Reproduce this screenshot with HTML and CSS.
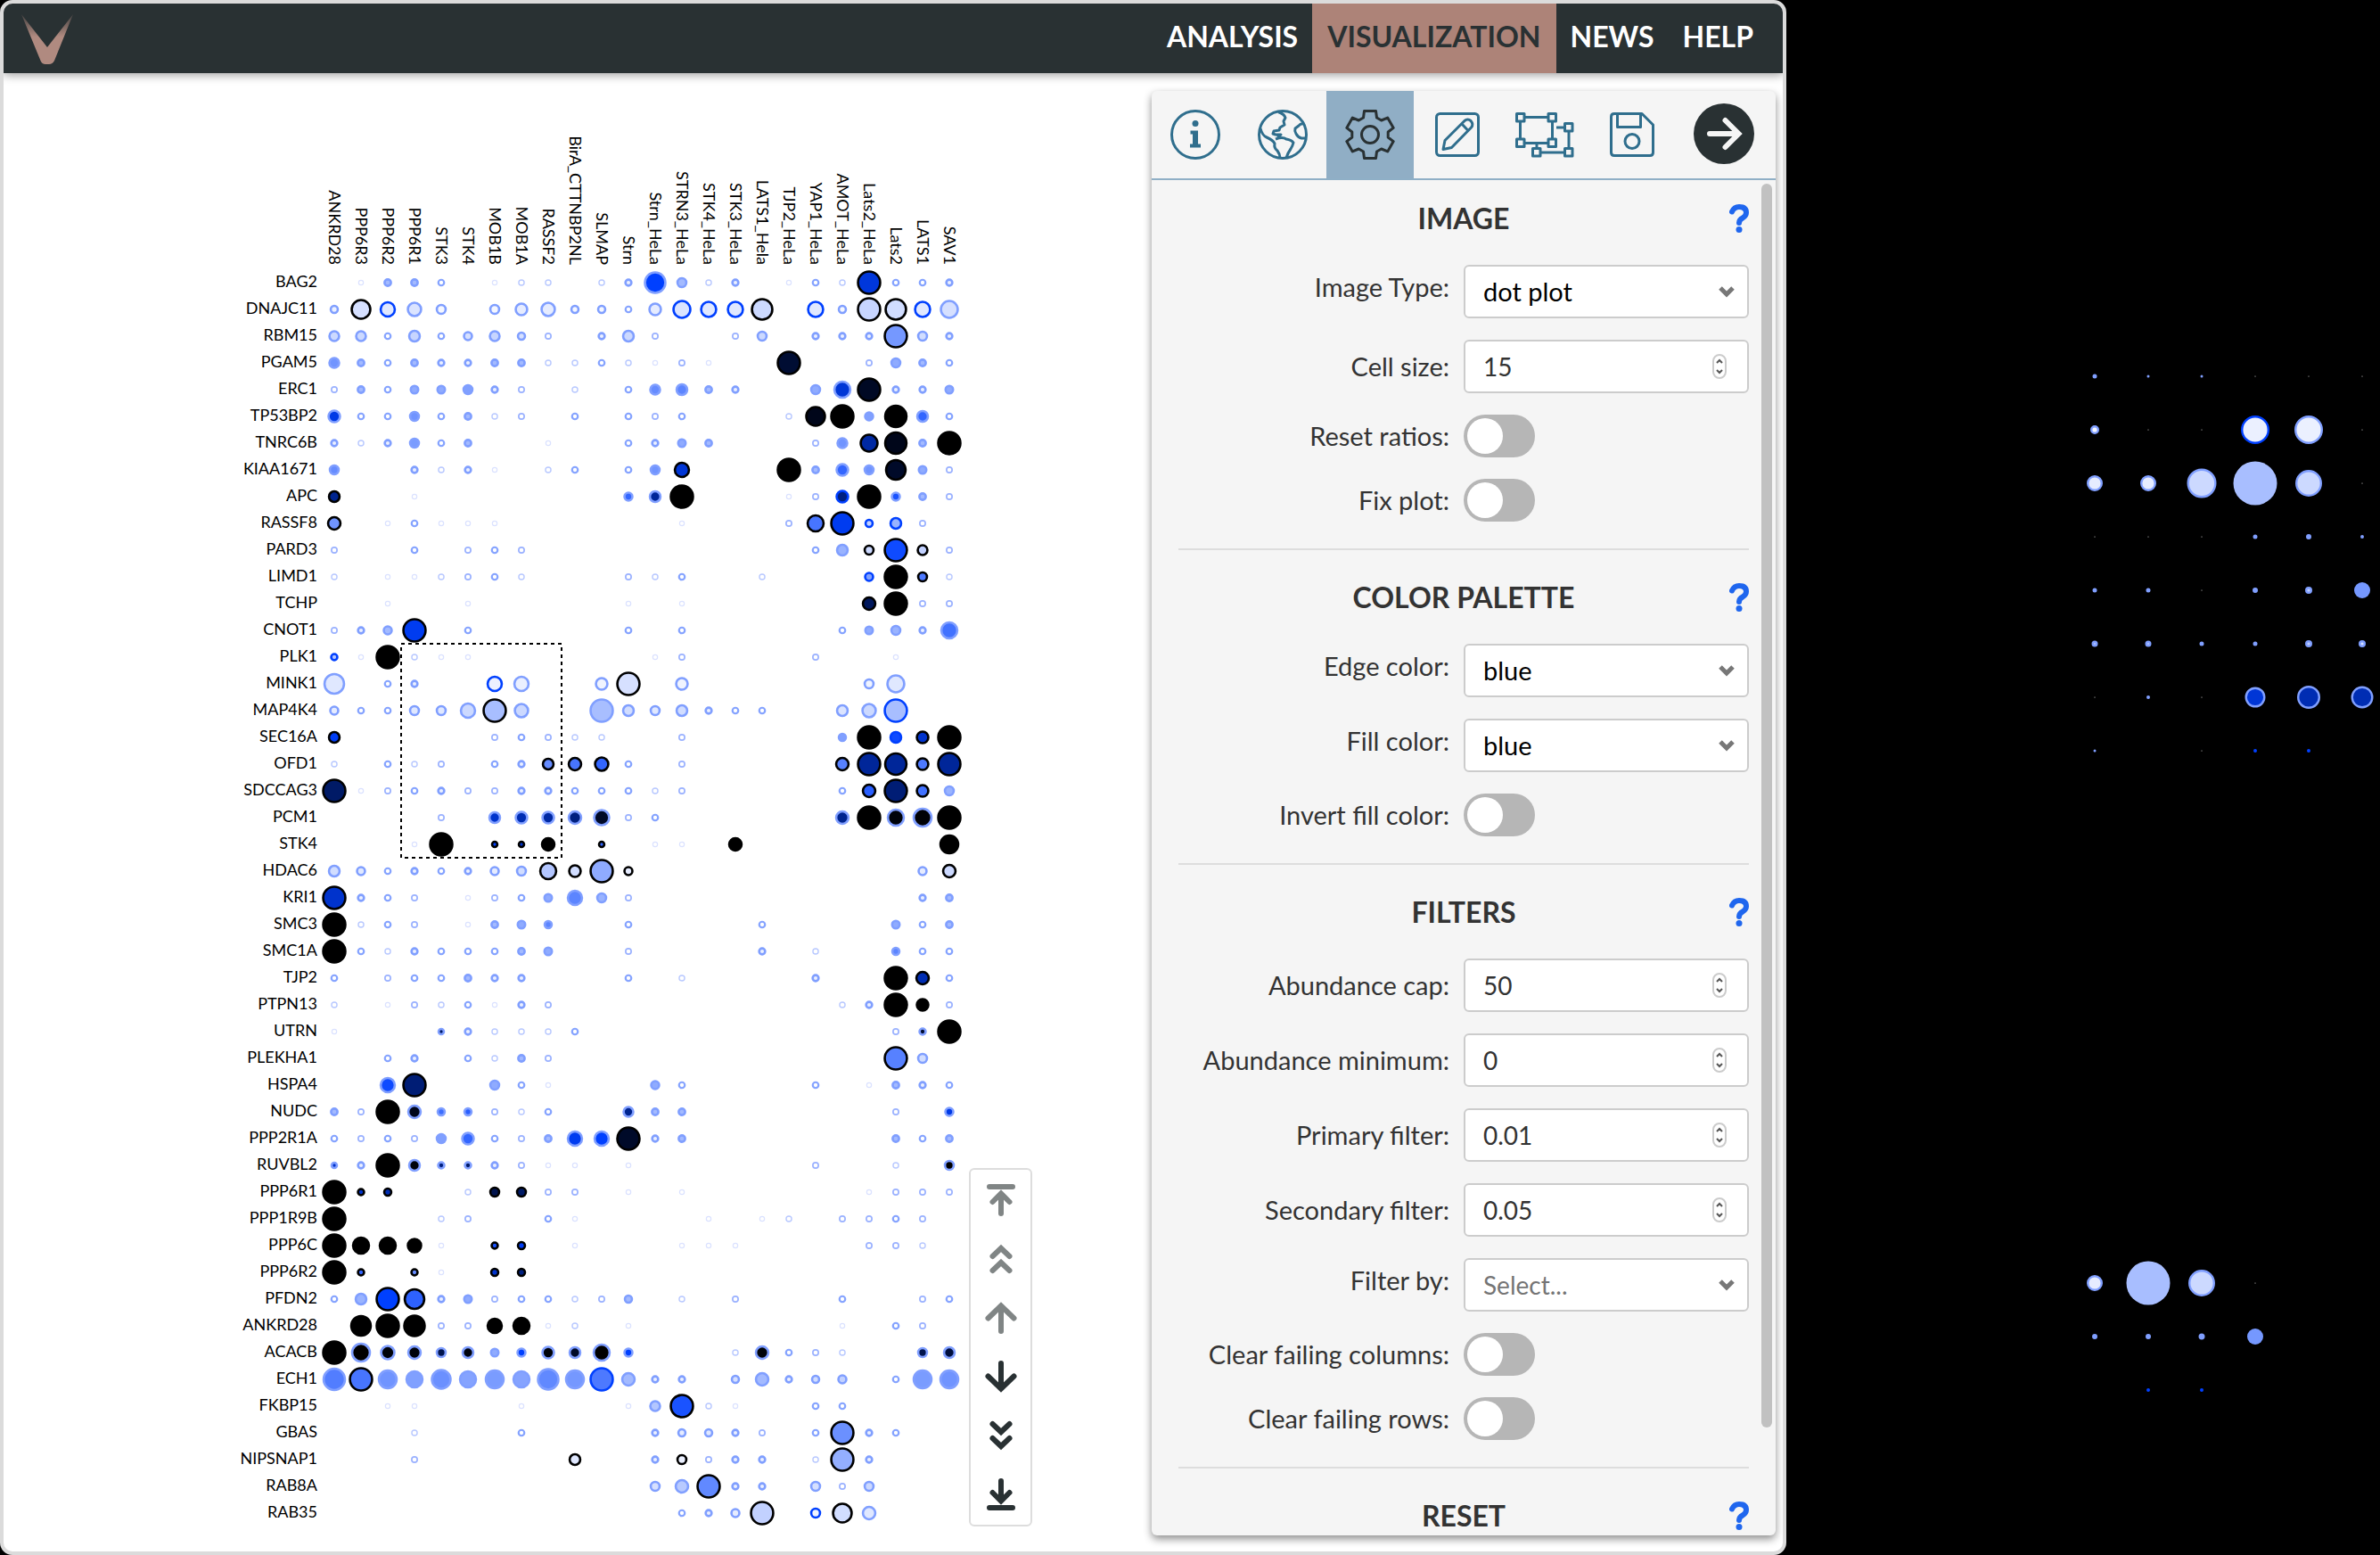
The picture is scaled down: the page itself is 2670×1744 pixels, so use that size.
FILE: index.html
```html
<!DOCTYPE html>
<html lang="en">
<head>
<meta charset="utf-8">
<title>Visualization</title>
<meta name="viewport" content="width=device-width, initial-scale=1">
<link rel="stylesheet" href="styles.css">
</head>
<body>
<div class="app">
  <header class="header">
    <a class="logo" href="#home" aria-label="Home">
      <svg width="60" height="60" viewBox="0 -2 60 60" aria-hidden="true">
        <defs>
          <linearGradient id="fade" x1="0" y1="0" x2="0" y2="1">
            <stop offset="0" stop-color="#b08a80" stop-opacity="0.2"/>
            <stop offset="0.45" stop-color="#b08a80"/>
          </linearGradient>
        </defs>
        <path fill="url(#fade)" d="M0 1 L29 38 L58 1 L37 53 Q35 57 31 57 H27 Q23 57 21.500 53 Z"/>
      </svg>
    </a>
    <nav class="nav">
      <a href="#analysis">ANALYSIS</a>
      <a href="#visualization" class="current">VISUALIZATION</a>
      <a href="#news">NEWS</a>
      <a href="#help">HELP</a>
    </nav>
  </header>

  <main class="main">
    <div class="plot"><svg id="plot" class="plot-svg" role="img" aria-label="Dot plot"></svg></div>

    <div class="pager">
      <button disabled aria-label="First page"><svg viewBox="0 0 40 40"><path d="M7 5H33M20 35V13M10.500 22L20 12.500L29.500 22"/></svg></button>
      <button disabled aria-label="Page up"><svg viewBox="0 0 40 40"><path d="M10.500 17L20 8L29.500 17M10.500 33L20 24L29.500 33"/></svg></button>
      <button disabled aria-label="Row up"><svg viewBox="0 0 40 40"><path d="M20 35V7M5.500 20.500L20 6.500L34.500 20.500"/></svg></button>
      <button aria-label="Row down"><svg viewBox="0 0 40 40"><path d="M20 5V33M5.500 19.500L20 33.500L34.500 19.500"/></svg></button>
      <button aria-label="Page down"><svg viewBox="0 0 40 40"><path d="M10.500 7L20 16L29.500 7M10.500 23L20 32L29.500 23"/></svg></button>
      <button aria-label="Last page"><svg viewBox="0 0 40 40"><path d="M7 35H33M20 5V27M10.500 18L20 27.500L29.500 18"/></svg></button>
    </div>

    <aside class="panel">
      <div class="tabs">
        <button class="tab" aria-label="Information">
          <svg width="56" height="56" viewBox="0 0 56 56"><circle cx="28" cy="28" r="26.500"/><circle class="solid" cx="28" cy="15.500" r="3.500"/><path class="solid" d="M22.500 23.500h8.500v15h3v4h-12v-4h3v-11h-2.500z"/></svg>
        </button>
        <button class="tab" aria-label="Overview">
          <svg width="56" height="56" viewBox="0 0 56 56"><circle cx="28" cy="28" r="26.500"/><path d="M23 2.500Q30 5 31 9L29 13L30 17L25 20L24 23L18 24L17 27L20 28L26 28L22 31M20 33Q28 30 32 33Q38 34 40 37Q39 41 37 44Q34 48 32 54M3 21Q5 29 10 31Q17 34 19 38Q18 43 22 46Q25 50 25 54M52 16Q48 15 46 18L42 21Q41 24 43 27Q45 31 49 32L54 32"/></svg>
        </button>
        <button class="tab active" aria-label="Settings">
          <svg width="56" height="56" viewBox="-28 -28 56 56"><circle r="9.500"/><path d="M-6.500 -26.500H6.500L7.500 -19L12.700 -16L19.700 -18.900L26.200 -7.600L20.200 -3V3L26.200 7.600L19.700 18.900L12.700 16L7.500 19L6.500 26.500H-6.500L-7.500 19L-12.700 16L-19.700 18.900L-26.200 7.600L-20.200 3V-3L-26.200 -7.600L-19.700 -18.900L-12.700 -16L-7.500 -19Z"/></svg>
        </button>
        <button class="tab" aria-label="Annotation">
          <svg width="52" height="52" viewBox="-1 -1 52 52"><rect x="1.500" y="1.500" width="47" height="47" rx="4"/><path d="M9 41.500L11 31.500L33 9.500Q36.500 6.500 40 9.500Q43.500 13.500 40.500 17L18.500 39.500ZM30 13L37 20.500"/></svg>
        </button>
        <button class="tab" aria-label="Selection">
          <svg width="66" height="52" viewBox="0 -1 66 52"><path d="M10 5.500H36.500M5.500 10V29.500M41.500 10V29.500M10 34.500H36.500M46 17H55M60 21.500V40M28.500 45H55M24 40V34.500M1.500 1.500h8.500v8.500h-8.500zM37 1.500h8.500v8.500h-8.500zM1.500 30h8.500v8.500h-8.500zM37 30h8.500v8.500h-8.500zM55.500 12.500h8.500v8.500h-8.500zM55.500 40.500h8.500v8.500h-8.500zM19.500 40.500h8.500v8.500h-8.500z"/></svg>
        </button>
        <button class="tab" aria-label="Save">
          <svg width="52" height="52" viewBox="-1 -1 52 52"><path d="M5 1.500H36L48.500 14V45Q48.500 48.500 45 48.500H5Q1.500 48.500 1.500 45V5Q1.500 1.500 5 1.500ZM8.500 2V16.500H34.500V2"/><circle cx="25" cy="32.500" r="8"/></svg>
        </button>
        <button class="tab collapse" aria-label="Hide panel">
          <svg width="68" height="68" viewBox="0 0 68 68"><circle cx="34" cy="34" r="34"/><path d="M18 34H49M35.500 19L50.500 34L35.500 49"/></svg>
        </button>
      </div>

      <div class="panel-body">
        <section class="section">
          <div class="section-head"><h2>IMAGE</h2><button class="help" aria-label="Help: image"><svg viewBox="0 0 22 32"><path d="M3 8.500Q5.500 3 11 3Q19 3 19 9.500Q19 13 15 15.500Q11 17.500 11 21"/><circle cx="11" cy="28.500" r="3.500"/></svg></button></div>
          <div class="row pick"><label for="type">Image Type:</label>
            <div class="field"><select id="type"><option>dot plot</option></select><svg class="chevron" viewBox="0 0 20 14"><path d="M3 3L10 10L17 3"/></svg></div></div>
          <div class="row"><label for="cell">Cell size:</label>
            <div class="field"><input id="cell" type="number" value="15"><svg class="spin" viewBox="0 0 16 28"><rect x="1" y="1" width="14" height="26" rx="7"/><path d="M5 10L8 7L11 10M5 18L8 21L11 18"/></svg></div></div>
          <div class="row"><label for="ratios">Reset ratios:</label><input id="ratios" type="checkbox" class="toggle"></div>
          <div class="row"><label for="fix">Fix plot:</label><input id="fix" type="checkbox" class="toggle"></div>
        </section>

        <section class="section">
          <div class="section-head"><h2>COLOR PALETTE</h2><button class="help" aria-label="Help: color palette"><svg viewBox="0 0 22 32"><path d="M3 8.500Q5.500 3 11 3Q19 3 19 9.500Q19 13 15 15.500Q11 17.500 11 21"/><circle cx="11" cy="28.500" r="3.500"/></svg></button></div>
          <div class="row pick"><label for="edge">Edge color:</label>
            <div class="field"><select id="edge"><option>blue</option></select><svg class="chevron" viewBox="0 0 20 14"><path d="M3 3L10 10L17 3"/></svg></div></div>
          <div class="row pick"><label for="fill">Fill color:</label>
            <div class="field"><select id="fill"><option>blue</option></select><svg class="chevron" viewBox="0 0 20 14"><path d="M3 3L10 10L17 3"/></svg></div></div>
          <div class="row"><label for="invert">Invert fill color:</label><input id="invert" type="checkbox" class="toggle"></div>
        </section>

        <section class="section">
          <div class="section-head"><h2>FILTERS</h2><button class="help" aria-label="Help: filters"><svg viewBox="0 0 22 32"><path d="M3 8.500Q5.500 3 11 3Q19 3 19 9.500Q19 13 15 15.500Q11 17.500 11 21"/><circle cx="11" cy="28.500" r="3.500"/></svg></button></div>
          <div class="row"><label for="cap">Abundance cap:</label>
            <div class="field"><input id="cap" type="number" value="50"><svg class="spin" viewBox="0 0 16 28"><rect x="1" y="1" width="14" height="26" rx="7"/><path d="M5 10L8 7L11 10M5 18L8 21L11 18"/></svg></div></div>
          <div class="row"><label for="min">Abundance minimum:</label>
            <div class="field"><input id="min" type="number" value="0"><svg class="spin" viewBox="0 0 16 28"><rect x="1" y="1" width="14" height="26" rx="7"/><path d="M5 10L8 7L11 10M5 18L8 21L11 18"/></svg></div></div>
          <div class="row"><label for="primary">Primary filter:</label>
            <div class="field"><input id="primary" type="number" step="0.01" value="0.01"><svg class="spin" viewBox="0 0 16 28"><rect x="1" y="1" width="14" height="26" rx="7"/><path d="M5 10L8 7L11 10M5 18L8 21L11 18"/></svg></div></div>
          <div class="row"><label for="secondary">Secondary filter:</label>
            <div class="field"><input id="secondary" type="number" step="0.01" value="0.05"><svg class="spin" viewBox="0 0 16 28"><rect x="1" y="1" width="14" height="26" rx="7"/><path d="M5 10L8 7L11 10M5 18L8 21L11 18"/></svg></div></div>
          <div class="row pick"><label for="by">Filter by:</label>
            <div class="field"><select id="by" class="empty"><option>Select...</option></select><svg class="chevron" viewBox="0 0 20 14"><path d="M3 3L10 10L17 3"/></svg></div></div>
          <div class="row"><label for="cols">Clear failing columns:</label><input id="cols" type="checkbox" class="toggle"></div>
          <div class="row"><label for="rows">Clear failing rows:</label><input id="rows" type="checkbox" class="toggle"></div>
        </section>

        <section class="section">
          <div class="section-head"><h2>RESET</h2><button class="help" aria-label="Help: reset"><svg viewBox="0 0 22 32"><path d="M3 8.500Q5.500 3 11 3Q19 3 19 9.500Q19 13 15 15.500Q11 17.500 11 21"/><circle cx="11" cy="28.500" r="3.500"/></svg></button></div>
        </section>
        <div class="scrollbar"></div>
      </div>
    </aside>
  </main>
</div>
<div class="closeup"><svg id="closeup" class="closeup-svg" role="img" aria-label="Selected region"></svg></div>
<script src="plot.js"></script>
</body>
</html>
```
FILE: styles.css
```css
* { box-sizing: border-box; }

body {
  margin: 0;
  height: 100vh;
  display: flex;
  background: #000;
  color: #333;
  font-family: Lato, "Liberation Sans", sans-serif;
  font-size: 28px;
  line-height: 36px;
  overflow: hidden;
}

button { margin: 0; padding: 0; border: 0; background: none; font: inherit; cursor: pointer; }

.app {
  flex: 1;
  min-width: 0;
  display: flex;
  flex-direction: column;
  border: 4px solid #dbdbdb;
  border-radius: 14px;
  background: #fff;
  overflow: hidden;
}

.closeup { width: 666px; }
.closeup-svg { display: block; width: 100%; height: 100%; }

/* header */
.header {
  height: 78px;
  flex: none;
  display: flex;
  justify-content: space-between;
  padding: 0 17px;
  background: #293133;
  box-shadow: 0 2px 10px rgba(0, 0, 0, 0.4);
  z-index: 1;
}
.logo { display: flex; align-items: center; padding-left: 3px; }
.nav { display: flex; }
.nav a {
  padding: 0 16px;
  color: #fff;
  font-size: 32px;
  font-weight: 700;
  line-height: 74px;
  text-decoration: none;
}
.nav .current { padding: 0 17px; background: #ad8378; color: #293133; }

/* plot */
.main { flex: 1; min-height: 0; display: flex; }
.plot { flex: 1; min-width: 0; }
.plot-svg { display: block; width: 100%; height: 100%; }
.plot-svg text { font-size: 18px; fill: #000; text-anchor: end; }
.selection { fill: none; stroke: #000; stroke-width: 2; stroke-dasharray: 4 4; }

.pager {
  align-self: flex-end;
  width: 71px;
  margin: 0 134px 28px 0;
  padding: 1px 0;
  border: 2px solid #ddd;
  border-radius: 6px;
  background: #fff;
  display: flex;
  flex-direction: column;
}
.pager button { height: 66px; display: flex; align-items: center; justify-content: center; color: #293133; }
.pager button:disabled { color: #808585; }
.pager svg { width: 40px; height: 40px; fill: none; stroke: currentColor; stroke-width: 6; stroke-linecap: round; }

/* settings panel */
.panel {
  width: 700px;
  margin: 20px 8px 18px 0;
  display: flex;
  flex-direction: column;
  border-radius: 6px;
  background: #f5f5f5;
  box-shadow: 0 4px 10px rgba(0, 0, 0, 0.45);
  overflow: hidden;
}
.tabs { height: 100px; flex: none; display: flex; border-bottom: 2px solid #8fafc6; }
.tab { width: 98px; display: flex; align-items: center; justify-content: center; }
.tab svg { fill: none; stroke: #2f6e8d; stroke-width: 3; stroke-linejoin: round; }
.tab .solid { fill: #2f6e8d; stroke: none; }
.tab.active { background: #90aec5; }
.tab.active svg { stroke: #293133; }
.tab.collapse { flex: 1; padding: 0 4px 2px 0; }
.tab.collapse circle { fill: #293133; stroke: none; }
.tab.collapse path { stroke: #f5f5f5; stroke-width: 6; stroke-linejoin: miter; stroke-linecap: round; }

.panel-body { position: relative; flex: 1; min-height: 0; padding: 23px 30px 0; overflow: hidden; }
.section { padding-bottom: 30px; display: flex; flex-direction: column; gap: 24px; }
.section + .section { padding-top: 33px; border-top: 2px solid #ddd; }
.section-head { display: grid; grid-template-columns: 1fr auto 1fr; align-items: center; margin-bottom: 8px; }
h2 { grid-column: 2; margin: 0; font-size: 32px; line-height: 40px; font-weight: 700; }
.help { justify-self: end; width: 22px; height: 32px; color: #1f66ee; }
.help svg { display: block; width: 22px; height: 32px; fill: none; stroke: currentColor; stroke-width: 6; stroke-linecap: round; }
.help circle { fill: currentColor; stroke: none; }

.row { display: grid; grid-template-columns: 1fr 1fr; align-items: center; }
.row label { padding-right: 16px; font-size: 29px; text-align: right; }
.pick label { padding-bottom: 10px; }

.field { display: grid; align-items: center; }
.field > * { grid-area: 1 / 1; }
.field select, .field input {
  width: 100%;
  height: 60px;
  padding: 0 20px;
  border: 2px solid #ccc;
  border-radius: 6px;
  background: #fff;
  color: #333;
  font: inherit;
  appearance: none;
}
.field select { font-size: 29px; color: #000; }
.field select.empty { font-size: 28px; color: #757575; }
.field input { appearance: textfield; }
.field input::-webkit-inner-spin-button { display: none; }
.chevron { width: 20px; height: 14px; margin-right: 15px; justify-self: end; fill: none; stroke: #777; stroke-width: 5; pointer-events: none; }
.spin { width: 16px; height: 28px; margin-right: 25px; justify-self: end; fill: #fff; stroke: #555; stroke-width: 2; pointer-events: none; }
.spin rect { stroke: #ccc; }
.spin path { fill: none; }

.toggle {
  appearance: none;
  width: 80px;
  height: 48px;
  margin: 0;
  padding: 4px;
  border-radius: 24px;
  background: #b6b6b6;
  cursor: pointer;
}
.toggle::before { content: ""; display: block; width: 40px; height: 40px; border-radius: 50%; background: #fff; }
.toggle:checked { background: #2f6e8d; }
.toggle:checked::before { margin-left: auto; }

.scrollbar { position: absolute; top: 4px; right: 4px; bottom: 121px; width: 12px; border-radius: 6px; background: #c1c1c1; }
```
FILE: plot.js
```js
// Each cell is a preset letter, or <edge><diameter>:<fill %>.
// Edges: k black, B blue, l light blue. "." is an empty cell.
const columns = "ANKRD28 PPP6R3 PPP6R2 PPP6R1 STK3 STK4 MOB1B MOB1A RASSF2 BirA_CTTNBP2NL SLMAP Strn Strn_HeLa STRN3_HeLa STK4_HeLa STK3_HeLa LATS1_Hela TJP2_HeLa YAP1_HeLa AMOT_HeLa Lats2_HeLa Lats2 LATS1 SAV1".split(" ");

const rows = `
BAG2 . a h h d . a b b . b g l25:50 l12:18 b g . a d b k27:57 d d g
DNAJC11 l10:4 k23:8 B18:6 l17:7 l12:2 . l12:2 l15:5 l17:5 l10:2 l10:2 d l15:5 B21:7 B19:6 B19:6 k25:10 . B19:6 l10:2 k27:11 k25:9 B19:6 l21:8
RBM15 l13:10 l13:10 d l14:11 d l11:8 l13:11 l10:8 c . g l14:10 c . . c l12:10 . g g g k27:27 l12:9 g
PGAM5 l13:28 h d h g g h h b b d b a c a . . k27:90 . . c l12:22 h d
ERC1 c h d i i l12:25 g c . b . d l13:30 l14:32 h g . . l12:22 l20:58 k27:93 g g i
TP53BP2 l15:55 d d l12:28 d h b c . d . d c d . . . b k23:95 k27:100 l11:25 k26:100 l14:40 d
TNRC6B g b g l12:26 d h . . a . . d g i h . . . c l13:28 k21:68 k26:95 h k27:100
KIAA1671 l12:30 . . g b g a . b d . d l12:28 k18:58 . . . k27:100 h l15:40 l12:28 k24:92 i c
APC k14:72 . . a . . . . . . . l11:40 l14:70 k27:100 . . . a c B15:75 k27:100 l11:45 h c
RASSF8 k16:28 . a d a a a . . . . . . a . . . c k20:36 k27:53 B10:12 B14:20 c .
PARD3 c . . d . c d c . . . . . . . . . . d l14:20 k12:10 k27:47 k13:12 c
LIMD1 b . a a b c d b . . . c b d . . b . . . B11:25 k27:100 k12:35 b
TCHP . . a . . a . . . . . a . a . . . . . . k16:82 k27:100 c c
CNOT1 c g l11:18 k27:53 . d . . . . . d . d . . . . . d i l12:20 g l20:37
PLK1 B9:15 a k27:100 b a a . . . . . . a c . . . . c . . a . .
MINK1 l24:6 . d g . . B18:4 l18:4 . . l15:3 k27:8 . l15:3 . . . . . . l12:3 l21:6 . .
MAP4K4 l11:5 d d l12:6 l12:6 l18:10 k27:17 l17:10 . . l27:17 l14:9 l12:6 l14:9 g d d . . l14:7 l17:10 B27:17 . .
SEC16A k14:52 . . . . . c d c b b . . c . . . . . l10:25 k27:100 B14:47 k15:60 k27:100
OFD1 b . d b c . d g k14:30 k16:36 k17:40 d . c . . . . . k16:33 k27:70 k26:70 k15:35 k27:70
SDCCAG3 k27:80 a c d g c c g g d d d b c . . . . . d k16:42 k27:77 k15:37 l12:20
PCM1 . . . . c . l14:60 l15:65 l15:68 l16:75 l19:92 c d . . . . . . l16:72 k27:100 l20:98 l22:99 k27:100
STK4 . . . a k27:100 . k8:50 k8:60 k16:100 . k8:40 . a a . k16:100 . . . . . . . k22:100
HDAC6 l14:9 l11:6 d g d g l11:5 l12:9 k20:15 k15:9 k27:22 k11:5 . . . . . . . . . . l11:5 k16:10
KRI1 k27:60 g d c . a c d i l18:32 l12:20 c . . . . . . . . . . g h
SMC3 k27:100 b d c . a h i l10:32 . . d . . . . d . . . . i d h
SMC1A k27:100 d b g d d d h i . . c . . . . g . b . . l10:32 d d
TJP2 d . c d d h g g . . . d . b . . . . g . . k27:100 k16:65 d
PTPN13 b . a c b d a g c . . . . . . . . . . b g k27:100 k15:100 c
UTRN a . . . l8:80 g b b b d . . . . . . . . . . . c l9:90 k27:100
PLEKHA1 . . d g . d b h c . . . . . . . . . . . . k27:33 l12:9 .
HSPA4 . . l18:47 k27:77 . . l12:22 d a . . . l11:22 d . . . . d . a h g d
NUDC h c k27:100 l16:95 l10:38 l10:42 c b d . . l13:72 h h . . . . . . . c . l11:55
PPP2R1A d c d c l12:25 l15:40 d c h l18:53 l18:50 k27:92 g h . . . . . . . h d h
RUVBL2 l8:60 g k27:100 l14:98 l9:75 l9:80 g c a a . a . . . . . . c . . b . l12:100
PPP6R1 k27:100 k9:60 k10:65 . . b k12:85 k12:80 c c . a . a . . . . . . a c c c
PPP1R9B k27:100 . . . b c . . d a . . . . a . a b . c c d c .
PPP6C k27:100 k20:100 k20:100 k17:100 a . k9:45 k10:52 . a . . . a a a . . . . c c b .
PPP6R2 k27:100 k9:40 . k9:30 a . k10:60 k10:75 . . . . . . . . . . . . . . . .
PFDN2 d l14:20 k27:50 k24:41 g i c d d b c l10:18 . b . c . . . d . . c d
ANKRD28 . k24:100 k27:100 k25:100 c c k18:100 k20:100 a b . a . . . . . . . a . d c .
ACACB k27:100 l22:100 l17:98 l16:98 l12:85 l14:97 i l11:50 l15:98 l14:92 l20:100 l11:50 . . . b l16:98 d c b . . l12:85 l14:88
ECH1 l26:34 k27:36 l22:28 l20:25 l23:29 l20:24 l22:26 l20:24 l25:31 l22:27 B27:35 l16:18 g g . l10:8 l16:18 g l10:9 l11:12 . d l22:26 l22:28
FKBP15 . . a a . . . a . . . a l13:15 k27:45 b a . . d d . . . .
GBAS . . . b . . . d . . . . g l10:5 l10:6 g c . d k27:29 g d . .
NIPSNAP1 . . . c . . . . . k14:6 . . g k12:4 c g g . b k27:21 g . . .
RAB8A . . . . . . . . . . . . l12:8 l16:14 k27:31 g g . l12:8 c l12:10 . . .
RAB35 . . . . . . . . . . . . . d g l11:5 k27:12 . B12:3 k23:9 l16:6 . . .`.trim().split("\n").map(line => line.split(" "));

// [diameter, fill %, edge colour, edge width]
const presets = {
  a: [6.5, 0, "#dbe2ff", 1.2],
  b: [7.5, 0, "#b9c9ff", 1.4],
  c: [8, 0, "#9bb2ff", 1.7],
  d: [8.7, 0, "#85a3ff", 2.2],
  g: [9.3, 4, "#809fff", 2.6],
  h: [9.8, 18, "#809fff", 2.6],
  i: [11, 22, "#809fff", 2.6]
};
const edges = { k: "#000", B: "#0040ff", l: "#809fff" };

function shade(v) {
  const mix = (a, b, t) => Math.round(a + (b - a) * t);
  if (v <= 50) return `rgb(${mix(255, 0, v / 50)},${mix(255, 64, v / 50)},255)`;
  const t = (v - 50) / 50;
  return `rgb(0,${mix(64, 0, t)},${mix(255, 0, t)})`;
}

function add(svg, tag, attrs, text) {
  const el = document.createElementNS("http://www.w3.org/2000/svg", tag);
  for (const key in attrs) el.setAttribute(key, attrs[key]);
  if (text) el.textContent = text;
  svg.appendChild(el);
}

function dot(svg, x, y, diameter, fill, edge, width) {
  add(svg, "circle", { cx: x, cy: y, r: (diameter - width) / 2, fill: shade(fill), stroke: edge, "stroke-width": width });
}

const plot = document.getElementById("plot");
const cell = 30, left = 356, top0 = 220;

columns.forEach((name, i) => {
  add(plot, "text", { transform: `translate(${left + i * cell + 9} ${top0 - 5}) rotate(90)` }, name);
});
rows.forEach(([name, ...cells], j) => {
  const y = top0 + j * cell + 15;
  add(plot, "text", { x: left - 4, y: y + 5 }, name);
  cells.forEach((code, i) => {
    if (code === ".") return;
    const x = left + i * cell + 15;
    if (presets[code]) return dot(plot, x, y, ...presets[code]);
    const [size, fill] = code.slice(1).split(":").map(Number);
    dot(plot, x, y, size + 0.5, fill, edges[code[0]], 2.6);
  });
});
add(plot, "rect", { class: "selection", x: left + 3 * cell, y: top0 + 14 * cell, width: 6 * cell, height: 8 * cell });

// Enlarged cells of the selection: [column, row, diameter, fill, edge]
const closeup = document.getElementById("closeup");
const enlarged = [
  [0, 0, 5, 25, "l"], [1, 0, 3, 25, "l"], [2, 0, 3, 25, "l"], [3, 0, 1, 0], [4, 0, 1, 0], [5, 0, 1, 0],
  [0, 1, 10, 2, "l"], [1, 1, 1, 0], [2, 1, 1, 0], [3, 1, 32, 4, "B"], [4, 1, 32, 4, "l"], [5, 1, 1, 0],
  [0, 2, 18, 5, "l"], [1, 2, 18, 5, "l"], [2, 2, 33, 10, "l"], [3, 2, 49, 17], [4, 2, 30, 10, "l"], [5, 2, 1, 0],
  [0, 3, 1, 0], [1, 3, 1, 0], [2, 3, 1, 0], [3, 3, 5, 25, "l"], [4, 3, 6, 25, "l"], [5, 3, 4, 25, "l"],
  [0, 4, 5, 25, "l"], [1, 4, 5, 25, "l"], [2, 4, 1, 0], [3, 4, 6, 25, "l"], [4, 4, 8, 12, "l"], [5, 4, 18, 27],
  [0, 5, 7, 15, "l"], [1, 5, 7, 15, "l"], [2, 5, 5, 25, "l"], [3, 5, 5, 25, "l"], [4, 5, 8, 12, "l"], [5, 5, 8, 8, "l"],
  [0, 6, 1, 0], [1, 6, 4, 25, "l"], [2, 6, 1, 0], [3, 6, 23, 58, "l"], [4, 6, 26, 65, "l"], [5, 6, 25, 65, "l"],
  [0, 7, 3, 25, "l"], [2, 7, 1, 0], [3, 7, 4, 50, "B"], [4, 7, 4, 50, "B"],
  [0, 17, 18, 5, "l"], [1, 17, 49, 17], [2, 17, 30, 10, "l"], [3, 17, 1, 0],
  [0, 18, 6, 25, "l"], [1, 18, 6, 25, "l"], [2, 18, 7, 25, "l"], [3, 18, 18, 27],
  [1, 19, 4, 50, "B"], [2, 19, 4, 50, "B"]
];
enlarged.forEach(([i, j, size, fill, edge]) => {
  const y = 422 + j * 60 - (j > 16 ? 3 : 0);
  const width = edge ? Math.min(2.4, size / 2) : 0;
  dot(closeup, 346 + i * 60, y, size, fill, edge ? edges[edge] : "none", width);
});
```
